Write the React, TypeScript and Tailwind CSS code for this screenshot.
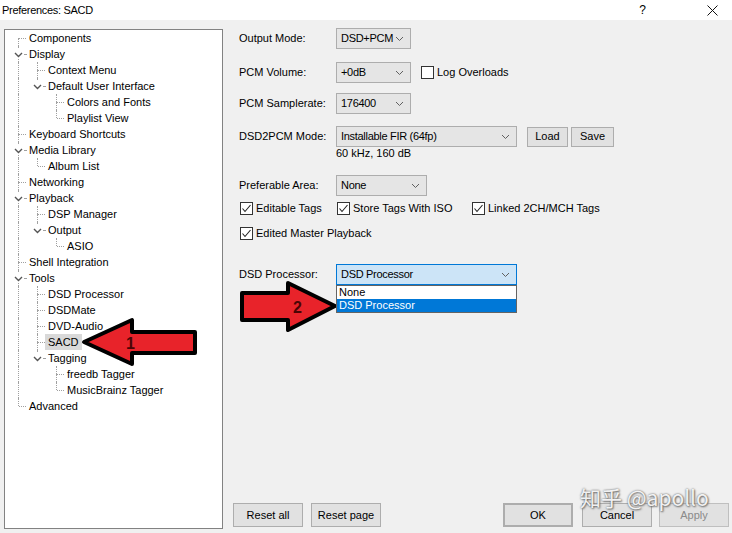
import type { ReactNode } from "react";

type Node = { label: string; children?: Node[] };

const tree: Node[] = [
  { label: "Components" },
  {
    label: "Display",
    children: [
      { label: "Context Menu" },
      {
        label: "Default User Interface",
        children: [{ label: "Colors and Fonts" }, { label: "Playlist View" }],
      },
    ],
  },
  { label: "Keyboard Shortcuts" },
  { label: "Media Library", children: [{ label: "Album List" }] },
  { label: "Networking" },
  {
    label: "Playback",
    children: [{ label: "DSP Manager" }, { label: "Output", children: [{ label: "ASIO" }] }],
  },
  { label: "Shell Integration" },
  {
    label: "Tools",
    children: [
      { label: "DSD Processor" },
      { label: "DSDMate" },
      { label: "DVD-Audio" },
      { label: "SACD" },
      {
        label: "Tagging",
        children: [{ label: "freedb Tagger" }, { label: "MusicBrainz Tagger" }],
      },
    ],
  },
  { label: "Advanced" },
];

type Row = {
  label: string;
  depth: number;
  guides: boolean[];
  isLast: boolean;
  isFirstRoot: boolean;
  hasChildren: boolean;
};

function flatten(nodes: Node[], depth = 0, guides: boolean[] = [], out: Row[] = []) {
  nodes.forEach((n, i) => {
    const isLast = i === nodes.length - 1;
    out.push({
      label: n.label,
      depth,
      guides,
      isLast,
      isFirstRoot: depth === 0 && i === 0,
      hasChildren: !!n.children,
    });
    if (n.children) flatten(n.children, depth + 1, [...guides, !isLast], out);
  });
  return out;
}

const rows = flatten(tree);
const dot = "absolute border-dotted border-[#a0a0a0]";

function TreeRow({ row }: { row: Row }) {
  return (
    <div className="flex h-[16px]">
      {row.guides.map((g, i) => (
        <div key={i} className="relative w-[19px] shrink-0">
          {g && <div className={`${dot} left-[11px] top-0 h-[16px] border-l`} />}
        </div>
      ))}
      <div className="relative w-[19px] shrink-0">
        {!row.isFirstRoot && <div className={`${dot} left-[11px] top-0 h-[8px] border-l`} />}
        {!row.isLast && <div className={`${dot} left-[11px] top-[8px] h-[8px] border-l`} />}
        {row.hasChildren ? (
          <>
            <div className="absolute left-[6px] top-[3px] h-[10px] w-[11px] bg-white" />
            <svg className="absolute left-[7px] top-[6px]" width="9" height="6" viewBox="0 0 9 6">
              <polyline points="1,1 4.5,4.5 8,1" fill="none" stroke="#555" strokeWidth="1.4" />
            </svg>
            <div className={`${dot} left-[17px] top-[8px] w-[2px] border-t`} />
          </>
        ) : (
          <div className={`${dot} left-[12px] top-[8px] w-[7px] border-t`} />
        )}
      </div>
      <div
        className={`h-[16px] px-[3px] leading-[16px] whitespace-nowrap ${
          row.label === "SACD" ? "bg-[#d9d9d9]" : ""
        }`}
      >
        {row.label}
      </div>
    </div>
  );
}

function Chevron() {
  return (
    <svg width="9" height="6" viewBox="0 0 9 6" className="shrink-0">
      <polyline points="1,1 4.5,4.5 8,1" fill="none" stroke="#606060" strokeWidth="1" />
    </svg>
  );
}

function Combo({ value, width, focused }: { value: string; width: string; focused?: boolean }) {
  return (
    <div
      className={`flex h-[21px] items-center justify-between border pl-[4px] pr-[6px] ${width} ${
        focused ? "border-[#0078d7] bg-[#cce4f7]" : "border-[#adadad] bg-[#e5e5e5]"
      }`}
    >
      <span className="whitespace-nowrap tracking-[-0.3px]">{value}</span>
      <Chevron />
    </div>
  );
}

function Check({ checked, children }: { checked?: boolean; children: ReactNode }) {
  return (
    <div className="flex items-center gap-[3px]">
      <div className="flex h-[13px] w-[13px] items-center justify-center border border-[#333] bg-white">
        {checked && (
          <svg width="11" height="11" viewBox="0 0 11 11">
            <polyline points="1.5,5.5 4,8.5 9.5,2" fill="none" stroke="#222" strokeWidth="1.1" />
          </svg>
        )}
      </div>
      <span className="whitespace-nowrap">{children}</span>
    </div>
  );
}

function Btn({ children, className = "" }: { children: ReactNode; className?: string }) {
  return (
    <div
      className={`flex h-[24px] w-[70px] items-center justify-center border border-[#adadad] bg-[#e1e1e1] ${className}`}
    >
      {children}
    </div>
  );
}

function FormRow({ label, children, className = "" }: { label: string; children: ReactNode; className?: string }) {
  return (
    <div className={`flex items-center ${className}`}>
      <div className="w-[97px] shrink-0">{label}</div>
      {children}
    </div>
  );
}

export default function App() {
  return (
    <div
      className="relative flex h-[533px] w-[732px] flex-col overflow-hidden bg-[#f0f0f0] text-[11px] text-black"
      style={{ fontFamily: '"Liberation Sans", Arial, sans-serif' }}
    >
      {/* title bar */}
      <div className="flex h-[20px] shrink-0 items-center bg-white">
        <div className="pl-[2px] text-[11px] tracking-[-0.3px]">Preferences: SACD</div>
        <div className="ml-auto pr-[61px] text-[12px]">?</div>
        <svg className="mr-[14px]" width="11" height="11" viewBox="0 0 11 11">
          <path d="M0.5,0.5 L10.5,10.5 M10.5,0.5 L0.5,10.5" stroke="#111" strokeWidth="1" />
        </svg>
      </div>

      <div className="flex min-h-0 flex-1">
        {/* tree */}
        <div className="ml-[4px] mt-[9px] h-[500px] w-[219px] shrink-0 border border-[#828282] bg-white pl-[2px]">
          {rows.map((r, i) => (
            <TreeRow key={i} row={r} />
          ))}
        </div>

        {/* page */}
        <div className="flex flex-1 flex-col">
          <div className="flex flex-col pl-[16px]">
            <FormRow label="Output Mode:" className="mt-[8px]">
              <Combo value="DSD+PCM" width="w-[75px]" />
            </FormRow>
            <FormRow label="PCM Volume:" className="mt-[13px]">
              <Combo value="+0dB" width="w-[75px]" />
              <div className="ml-[10px]">
                <Check>Log Overloads</Check>
              </div>
            </FormRow>
            <FormRow label="PCM Samplerate:" className="mt-[10px]">
              <Combo value="176400" width="w-[75px]" />
            </FormRow>
            <FormRow label="DSD2PCM Mode:" className="mt-[12px]">
              <Combo value="Installable FIR (64fp)" width="w-[181px]" />
              <div className="ml-[10px] flex h-[20px] w-[41px] items-center justify-center border border-[#adadad] bg-[#e1e1e1]">
                Load
              </div>
              <div className="ml-[3px] flex h-[20px] w-[43px] items-center justify-center border border-[#adadad] bg-[#e1e1e1]">
                Save
              </div>
            </FormRow>
            <div className="pl-[97px] leading-[13px]">60 kHz, 160 dB</div>
            <FormRow label="Preferable Area:" className="mt-[15px]">
              <Combo value="None" width="w-[91px]" />
            </FormRow>
            <div className="mt-[4px] flex h-[16px] items-center pl-[1px]">
              <div className="w-[97px]">
                <Check checked>Editable Tags</Check>
              </div>
              <div className="w-[135px]">
                <Check checked>Store Tags With ISO</Check>
              </div>
              <Check checked>Linked 2CH/MCH Tags</Check>
            </div>
            <div className="mt-[9px] flex h-[16px] items-center pl-[1px]">
              <Check checked>Edited Master Playback</Check>
            </div>
            <FormRow label="DSD Processor:" className="mt-[23px]">
              <div className="relative">
                <Combo value="DSD Processor" width="w-[181px]" focused />
                <div className="absolute left-0 top-[21px] z-10 w-[181px] border border-[#646464] bg-white leading-[12px]">
                  <div className="h-[13px] pl-[2px]">None</div>
                  <div className="h-[13px] bg-[#0078d7] pl-[2px] text-white">DSD Processor</div>
                </div>
              </div>
            </FormRow>
          </div>

          <div className="mt-auto flex pb-[6px] pl-[10px] pr-[3px]">
            <Btn>Reset all</Btn>
            <Btn className="ml-[8px]">Reset page</Btn>
            <Btn className="ml-auto border-2 border-[#0078d7]">OK</Btn>
            <Btn className="ml-[9px]">Cancel</Btn>
            <Btn className="ml-[7px] border-[#bfbfbf] bg-[#cccccc] text-[#8a8a8a]">Apply</Btn>
          </div>
        </div>
      </div>

      {/* annotation arrows */}
      <svg className="pointer-events-none absolute left-0 top-0" width="732" height="533" viewBox="0 0 732 533">
        <polygon
          points="84,342 132,320 132,332 195,332 195,353 132,353 132,364"
          fill="#e8232a"
          stroke="#000"
          strokeWidth="4"
          strokeLinejoin="round"
        />
        <text x="126" y="349" fontSize="16" fontWeight="bold" fill="#4a0505" fontFamily="Liberation Sans, sans-serif">
          1
        </text>
        <polygon
          points="242,293 288,293 288,283 335,306 288,330 288,320 242,320"
          fill="#e8232a"
          stroke="#000"
          strokeWidth="4"
          strokeLinejoin="round"
        />
        <text x="293" y="313" fontSize="16" fontWeight="bold" fill="#4a0505" fontFamily="Liberation Sans, sans-serif">
          2
        </text>
      </svg>

      {/* watermark */}
      <div
        className="pointer-events-none absolute left-[580px] top-[483px] text-[21px] leading-[28px] text-white/90 [text-shadow:0_0_2px_#555,1px_1px_2px_#777]"
        style={{ fontFamily: '"Noto Sans CJK SC", "Liberation Sans", sans-serif' }}
      >
        知乎 @apollo
      </div>
    </div>
  );
}
